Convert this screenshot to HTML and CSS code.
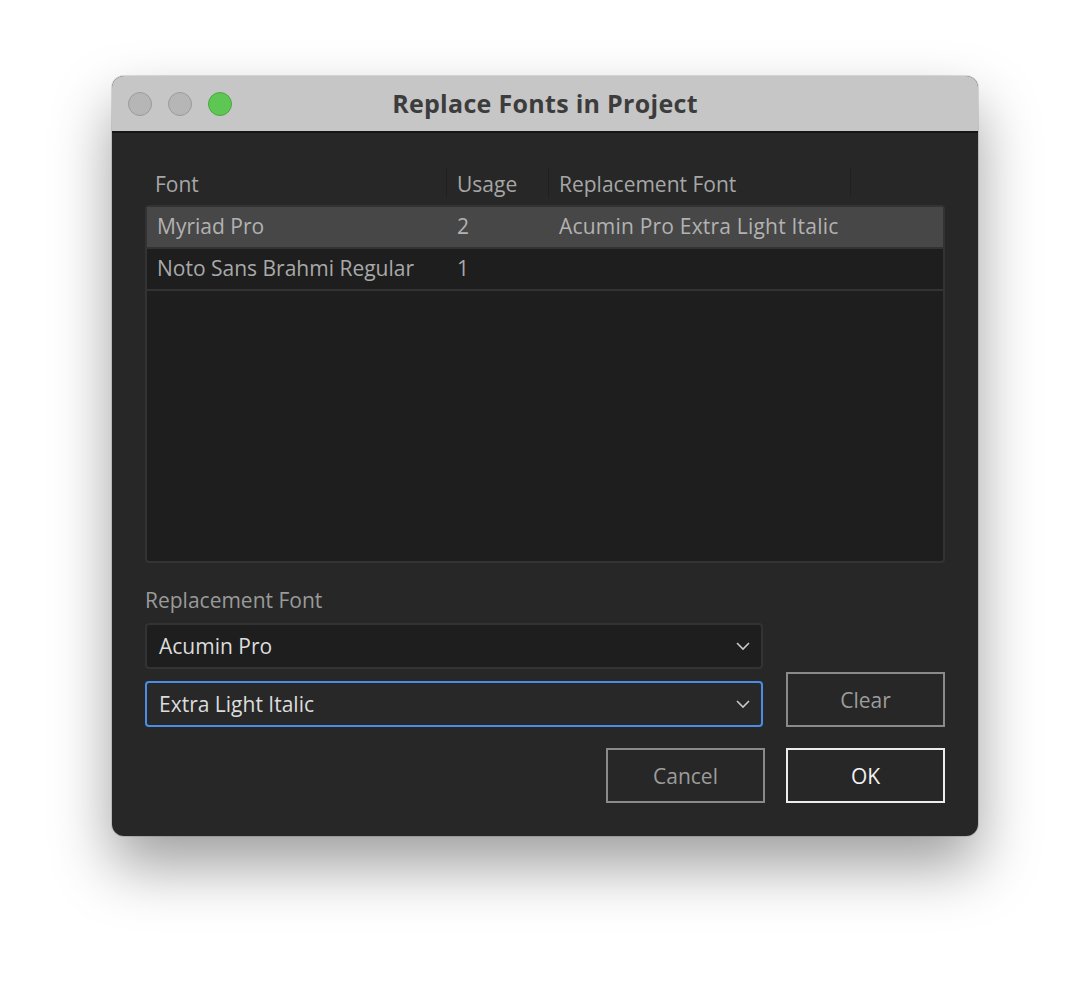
FILE: index.html
```html
<!DOCTYPE html>
<html lang="en">
  <head>
    <meta charset="UTF-8" />
    <title>Replace Fonts in Project</title>
    <link rel="stylesheet" href="styles.css">
  </head>
  <body>
    <div class="window">
      <!-- Title bar -->
      <div class="titlebar">
        <div class="lights">
          <span class="light"></span>
          <span class="light"></span>
          <span class="light light-green"></span>
        </div>
        <div class="title">Replace Fonts in Project</div>
      </div>

      <div class="dialog-body">
        <div class="table-head">
          <div class="th col-font">Font</div>
          <div class="th col-usage">Usage</div>
          <div class="th col-repl">Replacement Font</div>
          <div class="th col-rest"></div>
        </div>
        <div class="table-box">
          <div class="row selected">
            <div class="td col-font">Myriad Pro</div>
            <div class="td col-usage">2</div>
            <div class="td col-repl">Acumin Pro Extra Light Italic</div>
          </div>
          <div class="row">
            <div class="td col-font">Noto Sans Brahmi Regular</div>
            <div class="td col-usage">1</div>
            <div class="td col-repl"></div>
          </div>
        </div>

        <div class="replace-area">
          <div class="replace-left">
            <div class="field-label">Replacement Font</div>
            <div class="dropdown">
              <span>Acumin Pro</span>
              <svg class="chevron" width="16" height="10" viewBox="0 0 16 10"><polyline points="2,2 8,8 14,2" fill="none" stroke="#c8c8c8" stroke-width="1.6"/></svg>
            </div>
            <div class="dropdown focused">
              <span>Extra Light Italic</span>
              <svg class="chevron" width="16" height="10" viewBox="0 0 16 10"><polyline points="2,2 8,8 14,2" fill="none" stroke="#c8c8c8" stroke-width="1.6"/></svg>
            </div>
          </div>
          <button class="btn btn-clear">Clear</button>
        </div>

        <div class="actions">
          <button class="btn">Cancel</button>
          <button class="btn btn-ok">OK</button>
        </div>
      </div>
    </div>
  </body>
</html>
```

FILE: styles.css
```css
* {
  margin: 0;
  padding: 0;
  box-sizing: border-box;
  font-family: "Open Sans", sans-serif;
}

html {
  background: #ffffff;
}

body {
  min-height: 984px;
  padding: 76px 0 0 112px;
}

.window {
  width: 866px;
  height: 760px;
  border-radius: 12px;
  overflow: hidden;
  background: #272727;
  box-shadow: 0 30px 60px rgba(0, 0, 0, 0.38), 0 0 0 1px rgba(0, 0, 0, 0.12);
  display: flex;
  flex-direction: column;
}

/* Title bar */
.titlebar {
  height: 57px;
  background: #c6c6c6;
  border-bottom: 2px solid #151515;
  display: flex;
  align-items: center;
  position: relative;
}

.lights {
  display: flex;
  gap: 16px;
  padding-left: 16px;
}

.light {
  width: 24px;
  height: 24px;
  border-radius: 50%;
  background: #b6b6b6;
  border: 1px solid #9b9b9b;
}

.light-green {
  background: #5ec652;
  border-color: #4aa93f;
}

.title {
  position: absolute;
  left: 0;
  right: 0;
  top: 12px;
  text-align: center;
  font-size: 25px;
  line-height: 30px;
  font-weight: 700;
  color: #3c3c3c;
  letter-spacing: 0.3px;
}

/* Body */
.dialog-body {
  padding: 35px 33px 0;
  color: #a9a9a9;
  font-size: 21px;
}

.table-head {
  display: flex;
  height: 37px;
  align-items: flex-start;
}

.th {
  height: 30px;
  padding: 2px 0 0 10px;
  border-right: 1px solid #202020;
  line-height: 28px;
  color: #a6a6a6;
}

.col-font { width: 302px; }
.col-usage { width: 102px; }
.col-repl { width: 302px; }
.col-rest { flex: 1; border-right: none; }

.table-box {
  height: 358px;
  background: #1e1e1e;
  border: 2px solid #333333;
  border-radius: 4px;
}

.row {
  display: flex;
  height: 42px;
  border-bottom: 2px solid #333333;
  align-items: center;
  padding-bottom: 2px;
}

.row.selected {
  background: #474747;
  color: #b2b2b2;
}

.row .col-font { width: 300px; padding-left: 10px; }
.row .col-usage { width: 102px; padding-left: 10px; }
.row .col-repl { padding-left: 10px; letter-spacing: 0.2px; }

.replace-area {
  display: flex;
  align-items: flex-end;
  gap: 23px;
  margin-top: 24px;
}

.replace-left {
  width: 618px;
}

.field-label {
  color: #9a9a9a;
  line-height: 26px;
  margin-bottom: 10px;
}

.dropdown {
  height: 46px;
  background: #1e1e1e;
  border: 2px solid #333333;
  border-radius: 4px;
  display: flex;
  align-items: center;
  justify-content: space-between;
  padding: 0 10px 0 12px;
  color: #dcdcdc;
  font-size: 21px;
}

.dropdown + .dropdown {
  margin-top: 12px;
}

.dropdown.focused {
  background: #282828;
  border-color: #4b8de6;
}

.btn {
  width: 159px;
  height: 55px;
  background: transparent;
  border: 2px solid #8a8a8a;
  color: #9c9c9c;
  font-size: 21px;
  font-family: "Open Sans", sans-serif;
}

.actions {
  display: flex;
  justify-content: flex-end;
  gap: 21px;
  margin-top: 21px;
}

.btn-ok {
  border-color: #ececec;
  color: #f2f2f2;
}
```
